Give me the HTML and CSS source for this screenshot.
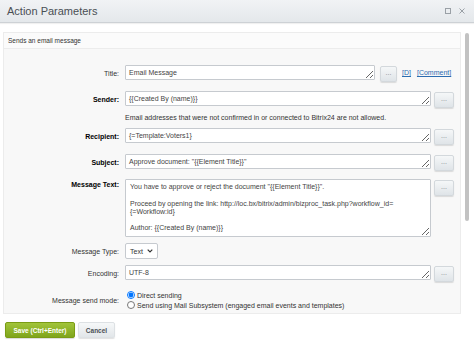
FILE: index.html
```html
<!DOCTYPE html>
<html lang="en">
<head>
    <meta charset="UTF-8">
    <meta name="viewport" content="width=device-width, initial-scale=1.0">
    <title>Action Parameters</title>
    <link rel="stylesheet" href="styles.css">
</head>
<body>
    <div class="dialog">
        <div class="dialog-head">
            <span class="dialog-title">Action Parameters</span>
            <span class="head-icons">
                <svg width="6" height="6" viewBox="0 0 6 6"><rect x="0.5" y="0.5" width="5" height="5" fill="none" stroke="#9aa0a6" stroke-width="1"/></svg>
                <svg width="6" height="6" viewBox="0 0 6 6"><path d="M0.5 0.5 L5.5 5.5 M5.5 0.5 L0.5 5.5" stroke="#9aa0a6" stroke-width="1"/></svg>
            </span>
        </div>

        <div class="dialog-body">
            <div class="panel">
                <div class="panel-head">Sends an email message</div>

                <div class="form">
                    <div class="row row-title">
                        <span class="label">Title:</span>
                        <div class="field">
                            <textarea class="input input-short">Email Message</textarea>
                            <button class="dots">...</button>
                            <a class="link link-d">[D]</a>
                            <a class="link">[Comment]</a>
                        </div>
                    </div>

                    <div class="row row-sender">
                        <span class="label required">Sender:</span>
                        <div class="field">
                            <textarea class="input">{{Created By (name)}}</textarea>
                            <button class="dots">...</button>
                        </div>
                    </div>

                    <div class="row row-note">
                        <span class="label"></span>
                        <div class="note">Email addresses that were not confirmed in or connected to Bitrix24 are not allowed.</div>
                    </div>

                    <div class="row row-recipient">
                        <span class="label required">Recipient:</span>
                        <div class="field">
                            <textarea class="input">{=Template:Voters1}</textarea>
                            <button class="dots">...</button>
                        </div>
                    </div>

                    <div class="row row-subject">
                        <span class="label required">Subject:</span>
                        <div class="field">
                            <textarea class="input">Approve document: "{{Element Title}}"</textarea>
                            <button class="dots">...</button>
                        </div>
                    </div>

                    <div class="row row-top row-message">
                        <span class="label required">Message Text:</span>
                        <div class="field">
                            <textarea class="input input-big">You have to approve or reject the document "{{Element Title}}".

Proceed by opening the link: http://loc.bx/bitrix/admin/bizproc_task.php?workflow_id=
{=Workflow:id}

Author: {{Created By (name)}}</textarea>
                            <button class="dots">...</button>
                        </div>
                    </div>

                    <div class="row row-type">
                        <span class="label">Message Type:</span>
                        <div class="field">
                            <span class="select">
                                <span>Text</span>
                                <svg width="6" height="4" viewBox="0 0 6 4"><path d="M0.7 0.7 L3 3 L5.3 0.7" fill="none" stroke="#333" stroke-width="1.2"/></svg>
                            </span>
                        </div>
                    </div>

                    <div class="row row-encoding">
                        <span class="label">Encoding:</span>
                        <div class="field">
                            <textarea class="input">UTF-8</textarea>
                            <button class="dots">...</button>
                        </div>
                    </div>

                    <div class="row row-mode">
                        <span class="label">Message send mode:</span>
                        <div class="radios">
                            <label class="radio"><input type="radio" name="mode" checked> Direct sending</label>
                            <label class="radio"><input type="radio" name="mode"> Send using Mail Subsystem (engaged email events and templates)</label>
                        </div>
                    </div>
                </div>
            </div>
            <div class="scrollbar"><div class="thumb"></div></div>
        </div>

        <div class="dialog-foot">
            <button class="btn btn-save">Save (Ctrl+Enter)</button>
            <button class="btn btn-cancel">Cancel</button>
        </div>
    </div>
</body>
</html>
```

FILE: styles.css
```css
*{
    box-sizing: border-box;
}
body{
    margin: 0;
    padding: 0;
    background: #fff;
    font-family: "Liberation Sans", Arial, sans-serif;
    color: #333;
}
.dialog{
    width: 474px;
    height: 342px;
    overflow: hidden;
}
.dialog-head{
    height: 23px;
    display: flex;
    align-items: center;
    justify-content: space-between;
    padding: 0 9px 1px 7px;
    background: linear-gradient(#f1f3f5, #e4e8eb);
    border-bottom: 1px solid #cdd1d5;
    box-shadow: 0 1px 1px rgba(0,0,0,0.06);
}
.dialog-title{
    font-size: 11px;
    color: #4a4f54;
}
.head-icons{
    display: flex;
    gap: 8px;
}
.dialog-body{
    display: flex;
    padding: 9px 0 0 3px;
}
.panel{
    width: 458px;
    background: #f8f8f8;
    border: 1px solid #ececec;
}
.panel-head{
    height: 16px;
    padding: 0 4px;
    line-height: 15px;
    font-size: 6.5px;
    color: #333;
    background: #fbfbfb;
    border-bottom: 1px solid #ececec;
}
.form{
    padding: 16px 0 4px;
}
.row{
    display: grid;
    grid-template-columns: 115px 1fr;
    column-gap: 6px;
    align-items: center;
    margin-bottom: 9px;
}
.row-top{
    align-items: start;
}
.row-sender{
    margin-bottom: 5px;
}
.row-note{
    margin-bottom: 6px;
}
.row-subject{
    margin-bottom: 8px;
}
.row-message{
    margin-bottom: 6px;
}
.row-type{
    margin-bottom: 6px;
}
.row-encoding{
    margin-bottom: 9px;
}
.row-mode{
    margin-bottom: 0;
}
.label{
    text-align: right;
    font-size: 7px;
    color: #333;
}
.row-top .label{
    padding-top: 2px;
}
.required{
    font-weight: bold;
    color: #000;
}
.field{
    display: flex;
    align-items: flex-start;
}
.input{
    width: 306px;
    height: 15px;
    margin: 0;
    padding: 3px 3px;
    border: 1px solid #c6cacf;
    border-radius: 1px;
    background: #fff;
    font-family: "Liberation Sans", Arial, sans-serif;
    font-size: 7px;
    line-height: 8px;
    color: #444;
    overflow: hidden;
}
.input-short{
    width: 250px;
}
.input-big{
    height: 58px;
    padding: 3px 4px;
    line-height: 8.3px;
}
.dots{
    width: 20px;
    height: 16px;
    margin: 1px 0 0 3px;
    padding: 0 0 3px;
    border: 1px solid #d3d8dc;
    border-radius: 2px;
    background: linear-gradient(#f5f7f8, #dfe4e8);
    box-shadow: 0 1px 1px rgba(0,0,0,0.12);
    font-family: "Liberation Sans", Arial, sans-serif;
    font-size: 7px;
    color: #7d848b;
}
.row-title .dots{
    margin-left: 5px;
    width: 17px;
}
.link{
    margin: 4px 0 0 5px;
    font-size: 7px;
    color: #2c6cb0;
    text-decoration: underline;
}
.link + .link{
    margin-left: 6px;
}
.note{
    font-size: 7px;
    color: #333;
    line-height: 9px;
}
.select{
    width: 33px;
    height: 16px;
    display: flex;
    align-items: center;
    justify-content: space-between;
    padding: 0 4px 0 4px;
    background: #fff;
    border: 1px solid #c6cacf;
    border-radius: 2px;
    font-size: 7px;
    color: #333;
}
.radios{
    display: flex;
    flex-direction: column;
    gap: 2px;
    font-size: 7px;
    color: #333;
}
.radio{
    display: flex;
    align-items: center;
    gap: 2px;
}
.radio input{
    width: 8px;
    height: 8px;
    margin: 0 0 0 2px;
}
.scrollbar{
    width: 6px;
    margin-left: 3px;
    padding: 1px 1px;
}
.thumb{
    height: 188px;
    border-radius: 2px;
    background: #c2c2c2;
}
.dialog-foot{
    display: flex;
    gap: 3px;
    padding: 8px 0 0 5px;
}
.btn{
    height: 16px;
    border-radius: 2px;
    font-family: "Liberation Sans", Arial, sans-serif;
    font-size: 6.5px;
    font-weight: bold;
    padding: 0 6px;
}
.btn-save{
    width: 70px;
    color: #fff;
    border: 1px solid #7a9c14;
    background: linear-gradient(#a1c43a, #7fa51c);
    box-shadow: 0 1px 1px rgba(0,0,0,0.15);
}
.btn-cancel{
    width: 37px;
    color: #4a4f54;
    border: 1px solid #dde1e4;
    background: linear-gradient(#f6f8f9, #e2e6e9);
    box-shadow: 0 1px 1px rgba(0,0,0,0.12);
}
```
